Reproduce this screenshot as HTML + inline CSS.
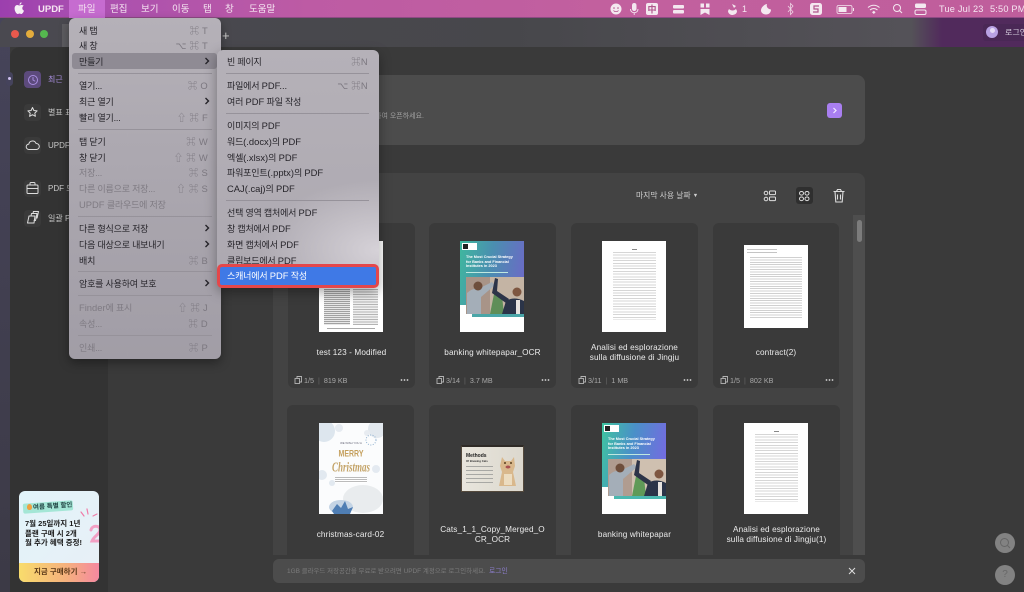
<!DOCTYPE html>
<html lang="ko"><head><meta charset="utf-8"><title>UPDF</title>
<style>
*{box-sizing:border-box;margin:0;padding:0}
html,body{width:1024px;height:592px;overflow:hidden;background:#3a3a3a}
body{font-family:"Liberation Sans","Noto Sans CJK KR",sans-serif;position:relative;filter:blur(.35px)}
.a{position:absolute}
.t{position:absolute;white-space:nowrap;line-height:12px}
.mb{top:2px;color:#f6e6f2;font-size:9.5px;line-height:14px;position:absolute;white-space:nowrap}
.ml{top:3px}
.m{color:#26242a;font-size:9px;letter-spacing:-.2px;margin-top:1px}
.l{font-weight:400;font-size:9.4px;letter-spacing:0}
.d{color:#7f7b83}
.s{color:#7c7880;font-size:9.4px;letter-spacing:.3px;text-align:right;margin-top:1px}
.sep{position:absolute;height:1px;background:#96929a}
.card{position:absolute;background:#3a3a3a;border-radius:6px}
.title{position:absolute;color:#ebebeb;font-size:8.2px;line-height:10px;text-align:center;letter-spacing:.12px;white-space:nowrap}
.meta{position:absolute;color:#a8a8a8;font-size:7.2px;line-height:10px;white-space:nowrap}
.paper{position:absolute;background:#fff;overflow:hidden}
</style></head><body>

<!-- desktop edge + window -->
<div class="a" style="left:0;top:18px;width:1024px;height:574px;background:#3a3a3a"></div>
<div class="a" style="left:0;top:18px;width:10px;height:574px;background:linear-gradient(#46445a,#3c3a46)"></div>
<div class="a" style="left:0;top:18px;width:1024px;height:29px;background:linear-gradient(90deg,#4a4950 0,#47474b 50%,#545258 89%,#512a5c 92%,#512a5c 100%);border-top-left-radius:8px"></div>
<div class="a" style="left:983px;top:24px;width:41px;height:17px;background:#4a2856;border-radius:3px 0 0 3px"></div>
<div class="a" style="left:10px;top:47px;width:98px;height:545px;background:#333;border-top-left-radius:10px"></div>
<div class="a" style="left:62px;top:24px;width:10px;height:23px;background:#5d5c60"></div>
<div class="a" style="left:11px;top:30px;width:8px;height:8px;border-radius:50%;background:#e8594d"></div>
<div class="a" style="left:25.5px;top:30px;width:8px;height:8px;border-radius:50%;background:#e3ac3c"></div>
<div class="a" style="left:40px;top:30px;width:8px;height:8px;border-radius:50%;background:#55b84f"></div>
<div class="t" style="left:222px;top:30px;color:#ccc;font-size:13px">+</div>
<div class="a" style="left:986px;top:26px;width:12px;height:12px;border-radius:50%;background:#b9a2e4"></div>
<div class="a" style="left:989.5px;top:28px;width:5px;height:5px;border-radius:50%;background:#e6dcf6"></div>
<div class="t" style="left:1005px;top:27px;color:#d8cfe0;font-size:8px">로그인</div>

<!-- sidebar -->
<div class="a" style="left:6px;top:72px;width:7px;height:14px;border-radius:5px;background:#45435c"></div>
<div class="a" style="left:8px;top:77px;width:3px;height:3px;border-radius:50%;background:#cfc0ee"></div>
<div class="a" style="left:24px;top:71px;width:17px;height:17px;border-radius:4px;background:#5c4a7c"></div>
<div class="a" style="left:24px;top:104px;width:17px;height:17px;border-radius:4px;background:#3a3a3a"></div>
<div class="a" style="left:24px;top:137px;width:17px;height:17px;border-radius:4px;background:#3a3a3a"></div>
<div class="a" style="left:24px;top:180px;width:17px;height:17px;border-radius:4px;background:#3a3a3a"></div>
<div class="a" style="left:24px;top:210px;width:17px;height:17px;border-radius:4px;background:#3a3a3a"></div>
<svg class="a" style="left:24px;top:71px" width="17" height="156" viewBox="0 0 17 156" fill="none" stroke-linecap="round" stroke-linejoin="round">
<g stroke="#a98ee0" stroke-width="1"><circle cx="9" cy="9" r="4.5"/><path d="M9 6.500V9l1.800 1"/></g>
<g stroke="#ddd" stroke-width="1">
<path d="M8.500 36.500l1.400 3 3.200.4-2.300 2.200.6 3.200-2.900-1.600-2.900 1.600.6-3.200-2.300-2.200 3.200-.4z"/>
<path d="M5 78.500a2.700 2.700 0 0 1-.2-5.400 3.800 3.800 0 0 1 7.300-.6 3 3 0 0 1 .4 6z"/>
<rect x="3" y="114" width="11" height="8.500" rx="1"/><path d="M6 114v-1.500a1 1 0 0 1 1-1h3a1 1 0 0 1 1 1v1.500M3 117.500h11"/>
<path d="M3.500 152l1.500-7h6l-1 7zM7 145l.5-2.500h5.500l-1.500 7h-1.500M9 142.500l.4-2h5.100l-1.400 6.500h-1"/>
</g></svg>
<div class="t" style="left:48px;top:74px;color:#a98ee0;font-size:8px">최근</div>
<div class="t" style="left:48px;top:107px;color:#c8c8c8;font-size:8px">별표 표시</div>
<div class="t" style="left:48px;top:140px;color:#c8c8c8;font-size:8px">UPDF 클라우드</div>
<div class="t" style="left:48px;top:183px;color:#c8c8c8;font-size:8px">PDF 도구</div>
<div class="t" style="left:48px;top:213px;color:#c8c8c8;font-size:8px">일괄 PDF</div>

<!-- promo -->
<div class="a" style="left:19px;top:491px;width:80px;height:91px;border-radius:6px;overflow:hidden;background:linear-gradient(135deg,#e2f4fa,#e8eff6)">
  <div class="a" style="left:4px;top:11px;width:50px;height:10px;background:#a4e6d6;transform:rotate(-4deg);border-radius:2px"></div>
  <div class="a" style="left:8px;top:13px;width:5px;height:6px;border-radius:50% 50% 40% 40%;background:#eea040"></div>
  <div class="t" style="left:14px;top:11px;font-size:6.500px;line-height:10px;font-weight:700;color:#244;transform:rotate(-4deg)">여름 특별 할인</div>
  <div class="t" style="left:6px;top:28px;font-size:7.500px;line-height:9.700px;font-weight:700;color:#1b1b1b">7월 25일까지 1년<br>플랜 구매 시 2개<br>월 추가 혜택 증정!</div>
  <svg class="a" style="left:58px;top:15px" width="22" height="42" fill="none" stroke-linecap="round">
    <path d="M4 6l3 4M10 3l1 5M16 10l4-2" stroke="#ef7ca8" stroke-width="1.200"/>
    <path d="M14 24c1-5 9-5 9 0 0 4-6 6-8 11h9" stroke="#f2a0c4" stroke-width="3"/>
  </svg>
  <div class="a" style="left:0;top:72px;width:80px;height:19px;background:linear-gradient(90deg,#f8dc6c,#f5b07e 60%,#f588a0)"></div>
  <div class="t" style="left:15px;top:75px;font-size:7.500px;line-height:12px;font-weight:700;color:#5a3818">지금 구매하기 →</div>
</div>

<!-- top banner -->
<div class="a" style="left:273px;top:75px;width:592px;height:70px;border-radius:8px;background:#4c4c4c"></div>
<div class="t" style="left:300px;top:111px;color:#a0a0a0;font-size:7px;width:124px;text-align:right">하여 오픈하세요.</div>
<div class="a" style="left:827px;top:103px;width:15px;height:15px;border-radius:3px;background:#a97ff0"></div>
<svg class="a" style="left:827px;top:103px" width="15" height="15" fill="none" stroke="#f2eaff" stroke-width="1.200"><path d="M6.500 5l2.500 2.500L6.500 10"/></svg>

<!-- list panel -->
<div class="a" style="left:273px;top:173px;width:592px;height:382px;border-radius:8px 8px 0 0;background:#434343"></div>
<div class="a" style="left:853px;top:215px;width:12px;height:340px;background:#4e4e4e"></div>
<div class="a" style="left:857px;top:220px;width:5px;height:22px;border-radius:3px;background:#7c7c7c"></div>
<div class="t" style="left:636px;top:190px;color:#cfcfcf;font-size:7.800px">마지막 사용 날짜 <span style="font-size:5.500px;position:relative;top:-1px">▼</span></div>
<div class="a" style="left:796px;top:187px;width:17px;height:17px;border-radius:3px;background:#2f2f2f"></div>
<svg class="a" style="left:760px;top:186px" width="90" height="20" fill="none" stroke="#ddd" stroke-width="1">
<circle cx="6" cy="7" r="1.800"/><circle cx="6" cy="13" r="1.800"/><rect x="9.500" y="5" width="6" height="3.600" rx=".8"/><rect x="9.500" y="11" width="6" height="3.600" rx=".8"/>
<rect x="39.500" y="5.500" width="4" height="3.600" rx="1.800"/><rect x="45" y="5.500" width="4" height="3.600" rx="1.800"/><rect x="39.500" y="11" width="4" height="3.600" rx="1.800"/><rect x="45" y="11" width="4" height="3.600" rx="1.800"/>
<path d="M73.500 5.500h11M76.500 5.500l1-2h3l1 2M75 5.500l.8 10.500h6.400l.8-10.500M77.500 8.500v5M80.500 8.500v5" stroke-width="1.100"/>
</svg>

<!-- cards row 1 -->
<div class="card" style="left:288px;top:223px;width:127px;height:165px"></div>
<div class="card" style="left:429px;top:223px;width:127px;height:165px"></div>
<div class="card" style="left:571px;top:223px;width:127px;height:165px"></div>
<div class="card" style="left:713px;top:223px;width:126px;height:165px"></div>
<!-- cards row 2 -->
<div class="card" style="left:287px;top:405px;width:127px;height:150px;border-radius:6px 6px 0 0"></div>
<div class="card" style="left:429px;top:405px;width:127px;height:150px;border-radius:6px 6px 0 0"></div>
<div class="card" style="left:571px;top:405px;width:127px;height:150px;border-radius:6px 6px 0 0"></div>
<div class="card" style="left:713px;top:405px;width:127px;height:150px;border-radius:6px 6px 0 0"></div>

<!-- thumb 1: paper -->
<div class="paper" style="left:319px;top:241px;width:64px;height:91px">
  <div class="a" style="left:5px;top:48px;width:26px;height:36px;background:repeating-linear-gradient(#a2a2a2 0 1px,#e8e8e8 1px 2px)"></div>
  <div class="a" style="left:34px;top:48px;width:25px;height:36px;background:repeating-linear-gradient(#b4b4b4 0 1px,#f0f0f0 1px 2.500px)"></div>
  <div class="a" style="left:8px;top:87px;width:48px;height:1px;background:#aaa"></div>
</div>

<!-- thumb 2: banking OCR -->
<div class="paper" style="left:460px;top:241px;width:64px;height:91px">
  <div class="a" style="left:0;top:0;width:64px;height:64px;background:linear-gradient(100deg,#3fb89e 0,#4a8fb0 45%,#6f66c8 100%)"></div>
  <div class="a" style="left:2px;top:2px;width:15px;height:7px;background:#fff"></div>
  <div class="a" style="left:3px;top:3px;width:5px;height:5px;background:#222"></div>
  <div class="t" style="left:6px;top:14px;font-size:3.800px;line-height:4.500px;color:#fff;font-weight:700">The Most Crucial Strategy<br>for Banks and Financial<br>Institutes in 2023</div>
  <div class="a" style="left:6px;top:31px;width:42px;height:1px;background:#bfe8e0"></div>
  <svg class="a" style="left:0;top:36px" width="64" height="42">
    <rect x="12" y="37" width="52" height="3" fill="#4aa6a8"/>
    <rect x="6" y="0" width="58" height="37" fill="#c4b4a4"/>
    <rect x="6" y="0" width="24" height="37" fill="#a89488"/>
    <path d="M30 37l4-20 8 2 2 18z" fill="#5f8e58"/>
    <path d="M7 37V16q5-5 11-4l14-7 3 3-14 12v17z" fill="#a4aeb8"/>
    <circle cx="18" cy="9" r="4.500" fill="#6e4e3c"/>
    <path d="M35 1l3 1-1 12 12 8-3 4-14-10z" fill="#2d3448"/>
    <path d="M42 37l4-13q8-5 18 0v13z" fill="#2b3448"/>
    <circle cx="57" cy="15" r="4.500" fill="#7e5640"/>
    <rect x="56" y="23" width="4" height="14" fill="#e8e4e0"/>
  </svg>
</div>
<!-- thumb 7: banking -->
<div class="paper" style="left:602px;top:423px;width:64px;height:91px">
  <div class="a" style="left:0;top:0;width:64px;height:64px;background:linear-gradient(100deg,#3fc4a0 0,#4a90c8 45%,#7a66e4 100%)"></div>
  <div class="a" style="left:2px;top:2px;width:15px;height:7px;background:#fff"></div>
  <div class="a" style="left:3px;top:3px;width:5px;height:5px;background:#222"></div>
  <div class="t" style="left:6px;top:14px;font-size:3.800px;line-height:4.500px;color:#fff;font-weight:700">The Most Crucial Strategy<br>for Banks and Financial<br>Institutes in 2023</div>
  <div class="a" style="left:6px;top:31px;width:42px;height:1px;background:#bfe8e0"></div>
  <svg class="a" style="left:0;top:36px" width="64" height="42">
    <rect x="12" y="37" width="52" height="3" fill="#4ab8b0"/>
    <rect x="6" y="0" width="58" height="37" fill="#cfc0b0"/>
    <rect x="6" y="0" width="24" height="37" fill="#b09c90"/>
    <path d="M30 37l4-20 8 2 2 18z" fill="#5f9a58"/>
    <path d="M7 37V16q5-5 11-4l14-7 3 3-14 12v17z" fill="#a4aeb8"/>
    <circle cx="18" cy="9" r="4.500" fill="#6e4e3c"/>
    <path d="M35 1l3 1-1 12 12 8-3 4-14-10z" fill="#2d3448"/>
    <path d="M42 37l4-13q8-5 18 0v13z" fill="#2b3448"/>
    <circle cx="57" cy="15" r="4.500" fill="#7e5640"/>
    <rect x="56" y="23" width="4" height="14" fill="#e8e4e0"/>
  </svg>
</div>

<!-- thumb 3 & 8: TOC -->
<div class="paper" style="left:602px;top:241px;width:64px;height:91px">
  <div class="a" style="left:30px;top:8px;width:5px;height:1px;background:#888"></div>
  <div class="a" style="left:11px;top:11px;width:43px;height:68px;background:repeating-linear-gradient(#d6d6d6 0 1px,#fff 1px 2.700px)"></div>
</div>
<div class="paper" style="left:744px;top:423px;width:64px;height:91px">
  <div class="a" style="left:30px;top:8px;width:5px;height:1px;background:#888"></div>
  <div class="a" style="left:11px;top:11px;width:43px;height:68px;background:repeating-linear-gradient(#d6d6d6 0 1px,#fff 1px 2.700px)"></div>
</div>

<!-- thumb 4: contract -->
<div class="paper" style="left:744px;top:245px;width:64px;height:83px">
  <div class="a" style="left:3px;top:4px;width:30px;height:4px;background:repeating-linear-gradient(#c4c4c4 0 1px,#fff 1px 3px)"></div>
  <div class="a" style="left:6px;top:12px;width:52px;height:62px;background:repeating-linear-gradient(#d0d0d0 0 1px,#fff 1px 2.400px)"></div>
</div>

<!-- thumb 5: christmas -->
<div class="paper" style="left:319px;top:423px;width:64px;height:91px;background:#fbfcfd">
  <svg class="a" style="left:0;top:0" width="64" height="91">
    <circle cx="5" cy="8" r="11" fill="#dde6ee"/><circle cx="20" cy="5" r="4" fill="#e6ebf1"/>
    <circle cx="58" cy="6" r="9" fill="#e2e8ee"/><circle cx="48" cy="10" r="3" fill="#e8ecf1"/>
    <circle cx="3" cy="52" r="5" fill="#e2e9f0"/><circle cx="57" cy="46" r="4" fill="#e4eaf1"/>
    <circle cx="13" cy="60" r="3" fill="#e2e9f0"/>
    <ellipse cx="44" cy="76" rx="20" ry="14" fill="#e9ecee"/>
    <ellipse cx="22" cy="84" rx="12" ry="7" fill="#c4d4e5"/>
    <path d="M13 88l5-7 4 4 4-7 3 8 5-2-3 7H15z" fill="#4f7eb4"/>
    <circle cx="52" cy="17" r="5" fill="none" stroke="#8fb0cf" stroke-dasharray="1 1.500"/>
  </svg>
  <div class="t" style="left:10px;width:44px;text-align:center;top:18px;font-size:2.800px;line-height:4px;color:#667">WE WISH YOU A</div>
  <div class="t" style="left:0;width:64px;text-align:center;top:27px;font-size:7px;line-height:9px;color:#c49f5c;font-weight:700;transform:scaleY(1.300)">MERRY</div>
  <div class="t" style="left:0;width:64px;text-align:center;top:38px;font-size:9px;line-height:13px;color:#c4a469;font-family:'Liberation Serif',serif;font-style:italic;font-weight:700;transform:scaleY(1.500)">Christmas</div>
  <div class="a" style="left:16px;top:54px;width:32px;height:6px;background:repeating-linear-gradient(#bbb 0 1px,#fff 1px 2px)"></div>
</div>

<!-- thumb 6: cats -->
<div class="a" style="left:461px;top:445px;width:63px;height:47px;background:linear-gradient(90deg,#e8e5dc,#dcd8ce);border:1px solid #54493c;border-top:2px solid #2e2a26;overflow:hidden">
  <div class="t" style="left:4px;top:7px;font-size:5px;line-height:5px;font-weight:700;color:#222">Methods</div>
  <div class="t" style="left:4px;top:13px;font-size:2.800px;line-height:3px;font-weight:700;color:#333">Of Brewing Cats</div>
  <div class="a" style="left:4px;top:19px;width:27px;height:19px;background:repeating-linear-gradient(#a8a8a4 0 1px,transparent 1px 4px)"></div>
  <svg class="a" style="left:33px;top:5px" width="28" height="38">
    <path d="M7 5l3 4h6l3-4 1 9-2 6 3 14H4l3-14-2-6z" fill="#d9b88c"/>
    <path d="M9 33V22h8v11z" fill="#ecdcc0"/>
    <circle cx="10" cy="11" r="1" fill="#5a4020"/><circle cx="16" cy="11" r="1" fill="#5a4020"/>
    <ellipse cx="13" cy="15" rx="2.500" ry="1.500" fill="#a85050"/>
  </svg>
</div>

<!-- titles -->
<div class="title" style="left:288px;width:127px;top:348px">test 123 - Modified</div>
<div class="title" style="left:429px;width:127px;top:348px">banking whitepapar_OCR</div>
<div class="title" style="left:571px;width:127px;top:343px">Analisi ed esplorazione<br>sulla diffusione di Jingju</div>
<div class="title" style="left:713px;width:126px;top:348px">contract(2)</div>
<div class="title" style="left:287px;width:127px;top:530px">christmas-card-02</div>
<div class="title" style="left:429px;width:127px;top:525px">Cats_1_1_Copy_Merged_O<br>CR_OCR</div>
<div class="title" style="left:571px;width:127px;top:530px">banking whitepapar</div>
<div class="title" style="left:713px;width:127px;top:525px">Analisi ed esplorazione<br>sulla diffusione di Jingju(1)</div>

<!-- metas -->
<div class="meta" style="left:304px;top:376px">1/5 <span style="color:#666;margin:0 2px">|</span> 819 KB</div>
<div class="meta" style="left:446px;top:376px">3/14 <span style="color:#666;margin:0 2px">|</span> 3.7 MB</div>
<div class="meta" style="left:588px;top:376px">3/11 <span style="color:#666;margin:0 2px">|</span> 1 MB</div>
<div class="meta" style="left:730px;top:376px">1/5 <span style="color:#666;margin:0 2px">|</span> 802 KB</div>
<svg class="a" style="left:290px;top:374px" width="460" height="14" fill="none" stroke="#b4b4b4" stroke-width=".9">
<g><rect x="5" y="4.500" width="4.500" height="5"/><path d="M7 4.500V2.500h4.500V8H9.500"/></g>
<g transform="translate(142 0)"><rect x="5" y="4.500" width="4.500" height="5"/><path d="M7 4.500V2.500h4.500V8H9.500"/></g>
<g transform="translate(284 0)"><rect x="5" y="4.500" width="4.500" height="5"/><path d="M7 4.500V2.500h4.500V8H9.500"/></g>
<g transform="translate(426 0)"><rect x="5" y="4.500" width="4.500" height="5"/><path d="M7 4.500V2.500h4.500V8H9.500"/></g>
</svg>
<svg class="a" style="left:400px;top:378px" width="440" height="6" fill="#d4d4d4">
<g><circle cx="1.500" cy="2" r=".9"/><circle cx="4.500" cy="2" r=".9"/><circle cx="7.500" cy="2" r=".9"/></g>
<g transform="translate(141 0)"><circle cx="1.500" cy="2" r=".9"/><circle cx="4.500" cy="2" r=".9"/><circle cx="7.500" cy="2" r=".9"/></g>
<g transform="translate(283 0)"><circle cx="1.500" cy="2" r=".9"/><circle cx="4.500" cy="2" r=".9"/><circle cx="7.500" cy="2" r=".9"/></g>
<g transform="translate(425 0)"><circle cx="1.500" cy="2" r=".9"/><circle cx="4.500" cy="2" r=".9"/><circle cx="7.500" cy="2" r=".9"/></g>
</svg>

<!-- bottom notice -->
<div class="a" style="left:273px;top:559px;width:592px;height:24px;border-radius:6px;background:#4c4c4c"></div>
<div class="t" style="left:287px;top:566px;color:#7c7c7c;font-size:6.450px">1GB 클라우드 저장공간을 무료로 받으려면 UPDF 계정으로 로그인하세요.</div>
<div class="t" style="left:489px;top:566px;color:#8a7cc8;font-size:6.800px">로그인</div>
<svg class="a" style="left:848px;top:567px" width="8" height="8" stroke="#ddd" stroke-width="1"><path d="M1 1l6 6M7 1L1 7"/></svg>

<!-- floating buttons -->
<div class="a" style="left:995px;top:533px;width:20px;height:20px;border-radius:50%;background:#828282"></div>
<div class="a" style="left:995px;top:565px;width:20px;height:20px;border-radius:50%;background:#828282"></div>
<svg class="a" style="left:995px;top:533px" width="20" height="52" fill="none" stroke="#666" stroke-width="1"><circle cx="9.500" cy="9.500" r="4"/><path d="M12.500 12.500l2.500 2.500"/></svg>
<div class="t" style="left:995px;width:20px;text-align:center;top:569px;color:#686868;font-size:10px">?</div>

<!-- menu bar -->
<div class="a" style="left:0;top:0;width:1024px;height:18px;background:linear-gradient(90deg,#9c3fae 0,#a94fb0 8%,#bd5ba4 30%,#c2609e 60%,#bf5e9c 100%);border-bottom:1px solid #8e4a84"></div>
<div class="a" style="left:69px;top:0;width:36px;height:18px;background:#c66cd0"></div>
<svg class="a" style="left:14px;top:2px" width="11" height="13" viewBox="0 0 11 13" fill="#f5eef5"><path d="M7.500 3c-1 0-1.500.5-2.200.5S4.200 3 3.300 3C2 3 .6 4.100.6 6.500c0 2.600 1.800 5.500 3.200 5.500.7 0 1-.5 1.700-.5s1 .5 1.700.5c1.100 0 2.200-1.800 2.800-3.300-1-.5-1.700-1.300-1.700-2.600 0-1.100.6-1.900 1.400-2.400C9.100 3.300 8.300 3 7.500 3zM7.500.3C6.400.5 5.400 1.500 5.500 2.800 6.700 2.700 7.700 1.600 7.500.3z"/></svg>
<div class="mb ml" style="left:38px;font-weight:700">UPDF</div>
<div class="mb ml" style="left:78px">파일</div>
<div class="mb ml" style="left:110px">편집</div>
<div class="mb ml" style="left:141px">보기</div>
<div class="mb ml" style="left:172px">이동</div>
<div class="mb ml" style="left:203px">탭</div>
<div class="mb ml" style="left:225px">창</div>
<div class="mb ml" style="left:249px">도움말</div>

<svg class="a" style="left:608px;top:0" width="320" height="18" fill="none">
<circle cx="8" cy="9" r="5.500" fill="#f4e8f0"/><circle cx="6" cy="8" r=".8" fill="#b0558c"/><circle cx="10" cy="8" r=".8" fill="#b0558c"/><path d="M5.500 10.500c1 1.500 4 1.500 5 0" stroke="#b0558c" stroke-width=".8"/>
<rect x="24" y="3" width="4.500" height="8" rx="2.200" fill="#f4e8f0"/><path d="M22.500 9c0 5 7.500 5 7.500 0M26.200 13v2" stroke="#f4e8f0" stroke-width=".9"/>
<rect x="38" y="3" width="12" height="12" rx="2" fill="#f4e8f0"/><text x="44" y="12.500" font-size="9" text-anchor="middle" fill="#b0558c" font-weight="700" font-family="Noto Sans CJK SC,sans-serif">中</text>
<rect x="65" y="5" width="11" height="3.500" rx="1" fill="#f4e8f0"/><rect x="65" y="10" width="11" height="3.500" rx="1" fill="#f4e8f0"/>
<path d="M92.500 3.500h3.500v4h-3.500zM98 3.500h3.500v4H98zM92.500 9h9v6l-4.500-2.500-4.500 2.500z" fill="#f4e8f0"/>
<path d="M121 9c2 2 5 2 7 0l1 2c0 3-3 4-5 4s-4-2-4-4zM124 4l4 2-2 2z" fill="#f4e8f0"/>
<path d="M159 4c-1 3 1 5 4 5.500 0 3-2 5-5 5s-5-2-5-4c0-3 3-6 6-6.500z" fill="#f4e8f0"/>
<path d="M180 6l5 6-2.500 2.500V3.500L185 6l-5 6" stroke="#f4e8f0" stroke-width=".8" opacity=".85"/>
<rect x="202" y="3" width="12" height="12" rx="2.500" fill="#f4e8f0"/><path d="M211 6h-5v3h4v3h-5" stroke="#b0558c" stroke-width="1.200"/>
<rect x="229" y="5.500" width="15" height="8" rx="1.500" stroke="#f4e8f0" stroke-width=".8"/><rect x="230.500" y="7" width="8" height="5" fill="#f4e8f0"/><rect x="245" y="8" width="1" height="3" fill="#f4e8f0"/>
<path d="M260 7.500c3.500-3 8-3 11.500 0M262 10c2.300-2 5.200-2 7.500 0" stroke="#f4e8f0" stroke-width="1.100"/><path d="M264 12.200l1.800-1.400 1.800 1.400-1.800 1.800z" fill="#f4e8f0"/>
<circle cx="289" cy="8" r="3.500" stroke="#f4e8f0" stroke-width="1"/><path d="M291.500 10.500l2.500 2.500" stroke="#f4e8f0" stroke-width="1.100"/>
<rect x="307" y="3.500" width="11" height="4.500" rx="1.500" fill="#f4e8f0"/><rect x="307" y="10" width="11" height="4.500" rx="1.500" stroke="#f4e8f0"/>
</svg>
<div class="mb" style="left:742px;font-size:9px">1</div>
<div class="mb" style="left:939px;font-size:9.200px;letter-spacing:.2px">Tue Jul 23</div>
<div class="mb" style="left:990px;font-size:9.200px;letter-spacing:.2px">5:50 PM</div>

<!-- File menu -->
<div class="a" style="left:69px;top:18px;width:152px;height:341px;border-radius:6px;background:linear-gradient(180deg,#b5b1b8 0,#aca8b0 40%,#a19da6 100%);box-shadow:0 4px 10px rgba(0,0,0,.35)"></div>
<div class="a" style="left:72px;top:53px;width:145px;height:16px;border-radius:3px;background:#8f8b94"></div>

<div class="t m" style="left:79px;top:24px">새 탭</div><div class="t s" style="right:816px;top:24px">⌘ T</div>
<div class="t m" style="left:79px;top:39px">새 창</div><div class="t s" style="right:816px;top:39px">⌥ ⌘ T</div>
<div class="t m" style="left:79px;top:55px">만들기</div>
<div class="sep" style="left:78px;top:73px;width:134px"></div>
<div class="t m" style="left:79px;top:79px">열기...</div><div class="t s" style="right:816px;top:79px">⌘ O</div>
<div class="t m" style="left:79px;top:95px">최근 열기</div>
<div class="t m" style="left:79px;top:111px">빨리 열기...</div><div class="t s" style="right:816px;top:111px">⇧ ⌘ F</div>
<div class="sep" style="left:78px;top:129px;width:134px"></div>
<div class="t m" style="left:79px;top:135px">탭 닫기</div><div class="t s" style="right:816px;top:135px">⌘ W</div>
<div class="t m" style="left:79px;top:151px">창 닫기</div><div class="t s" style="right:816px;top:151px">⇧ ⌘ W</div>
<div class="t m d" style="left:79px;top:166px">저장...</div><div class="t s" style="right:816px;top:166px">⌘ S</div>
<div class="t m d" style="left:79px;top:182px">다른 이름으로 저장...</div><div class="t s" style="right:816px;top:182px">⇧ ⌘ S</div>
<div class="t m d" style="left:79px;top:198px"><b class="l">UPDF</b> 클라우드에 저장</div>
<div class="sep" style="left:78px;top:216px;width:134px"></div>
<div class="t m" style="left:79px;top:222px">다른 형식으로 저장</div>
<div class="t m" style="left:79px;top:238px">다음 대상으로 내보내기</div>
<div class="t m" style="left:79px;top:254px">배치</div><div class="t s" style="right:816px;top:254px">⌘ B</div>
<div class="sep" style="left:78px;top:271px;width:134px"></div>
<div class="t m" style="left:79px;top:277px">암호를 사용하여 보호</div>
<div class="sep" style="left:78px;top:295px;width:134px"></div>
<div class="t m d" style="left:79px;top:301px"><b class="l">Finder</b>에 표시</div><div class="t s" style="right:816px;top:301px">⇧ ⌘ J</div>
<div class="t m d" style="left:79px;top:317px">속성...</div><div class="t s" style="right:816px;top:317px">⌘ D</div>
<div class="sep" style="left:78px;top:335px;width:134px"></div>
<div class="t m d" style="left:79px;top:341px">인쇄...</div><div class="t s" style="right:816px;top:341px">⌘ P</div>
<svg class="a" style="left:204px;top:57px" width="6" height="232" fill="none" stroke="#26242a" stroke-width="1.400"><path d="M1.500 1l3 3-3 3M1.500 41l3 3-3 3M1.500 168l3 3-3 3M1.500 184l3 3-3 3M1.500 223l3 3-3 3"/></svg>

<!-- Submenu -->
<div class="a" style="left:217px;top:50px;width:162px;height:238px;border-radius:6px;background:radial-gradient(ellipse 120px 70px at 100% 84%,#d6d2d8 0,rgba(214,210,216,0) 100%),linear-gradient(180deg,#b5b1b8,#aca8b0);box-shadow:0 4px 12px rgba(0,0,0,.35)"></div>
<div class="t m" style="left:227px;top:55px">빈 페이지</div><div class="t s" style="right:656px;top:55px">⌘N</div>
<div class="sep" style="left:226px;top:73px;width:143px"></div>
<div class="t m" style="left:227px;top:79px">파일에서 <b class="l">PDF...</b></div><div class="t s" style="right:656px;top:79px">⌥ ⌘N</div>
<div class="t m" style="left:227px;top:95px">여러 <b class="l">PDF</b> 파일 작성</div>
<div class="sep" style="left:226px;top:113px;width:143px"></div>
<div class="t m" style="left:227px;top:119px">이미지의 <b class="l">PDF</b></div>
<div class="t m" style="left:227px;top:135px">워드<b class="l">(.docx)</b>의 <b class="l">PDF</b></div>
<div class="t m" style="left:227px;top:151px">엑셀<b class="l">(.xlsx)</b>의 <b class="l">PDF</b></div>
<div class="t m" style="left:227px;top:166px">파워포인트<b class="l">(.pptx)</b>의 <b class="l">PDF</b></div>
<div class="t m" style="left:227px;top:182px"><b class="l">CAJ(.caj)</b>의 <b class="l">PDF</b></div>
<div class="sep" style="left:226px;top:200px;width:143px"></div>
<div class="t m" style="left:227px;top:206px">선택 영역 캡처에서 <b class="l">PDF</b></div>
<div class="t m" style="left:227px;top:222px">창 캡처에서 <b class="l">PDF</b></div>
<div class="t m" style="left:227px;top:238px">화면 캡처에서 <b class="l">PDF</b></div>
<div class="t m" style="left:227px;top:254px">클립보드에서 <b class="l">PDF</b></div>
<div class="a" style="left:217px;top:264px;width:162px;height:24px;border-radius:5px;background:#3f79e6;border:3px solid #e4474a"></div>
<div class="t m" style="left:227px;top:269px;color:#fff">스캐너에서 <b class="l">PDF</b> 작성</div>

</body></html>
